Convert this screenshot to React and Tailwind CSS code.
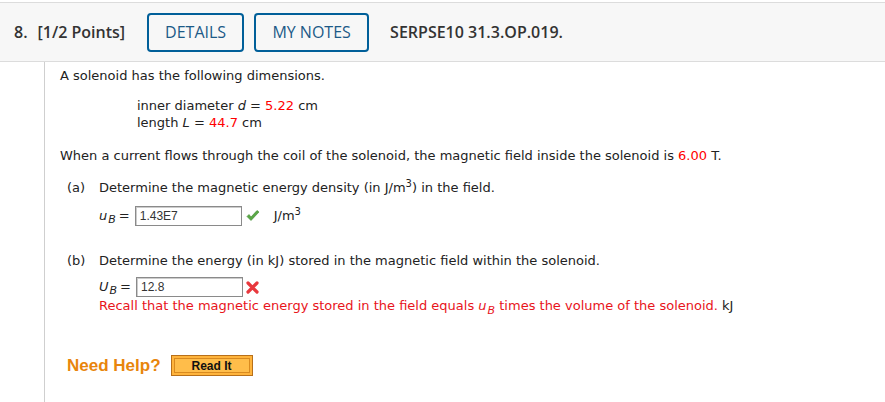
import React from 'react';

const Red = ({ children }) => <span className="text-[#ff0000]">{children}</span>;

const Sub = ({ children }) => (
  <span className="relative top-[4px] text-[11px] ml-[1px] italic">{children}</span>
);

const CheckIcon = () => (
  <svg width="14" height="12" viewBox="0 0 14 12" className="ml-[4px]">
    <path d="M1 6.5 L5 10.5 L13 2 L11 0.5 L5 7 L3 4.5 Z" fill="#5aa845" stroke="#3f8a32" strokeWidth="0.6" />
  </svg>
);

const CrossIcon = () => (
  <svg width="13" height="13" viewBox="0 0 13 13" className="ml-[3px]">
    <path d="M2 2 L11 11 M11 2 L2 11" stroke="#e8383d" strokeWidth="3.2" strokeLinecap="round" />
  </svg>
);

const AnswerBox = ({ value }) => (
  <div className="w-[107px] h-[20px] border border-[#8a8a8a] bg-white flex items-center px-[4px] text-[12px] text-[#333] font-['Liberation_Sans',Arial,sans-serif] shadow-[inset_1px_1px_0_#ccc]">
    {value}
  </div>
);

export default function App() {
  return (
    <div className="w-[885px] h-[402px] bg-white overflow-hidden text-[#222]">
      <header className="mt-[2px] h-[60px] bg-[#f7f7f7] border-y border-[#dcdcdc] flex items-center pl-[14px] font-['Open_Sans',sans-serif] text-[16px] font-semibold text-[#333]">
        <span>8.</span>
        <span className="ml-[10px]">[1/2 Points]</span>
        <button className="ml-[22px] w-[97px] h-[39px] border-2 border-[#005f99] rounded-[4px] text-[#1c5a87] font-normal text-[16px]">
          DETAILS
        </button>
        <button className="ml-[10px] w-[115px] h-[39px] border-2 border-[#005f99] rounded-[4px] text-[#1c5a87] font-normal text-[16px]">
          MY NOTES
        </button>
        <span className="ml-[21px]">SERPSE10 31.3.OP.019.</span>
      </header>

      <div className="ml-[44px] border-l border-[#cfcfcf] h-[340px] pl-[15px] pt-[5px] font-['DejaVu_Sans',Verdana,sans-serif] text-[13px]">
        <p className="leading-[17px]">A solenoid has the following dimensions.</p>

        <div className="mt-[13px] ml-[77px] leading-[17px]">
          <div>
            inner diameter <i>d</i> = <Red>5.22</Red> cm
          </div>
          <div>
            length <i>L</i> = <Red>44.7</Red> cm
          </div>
        </div>

        <p className="mt-[16px] leading-[17px]">
          When a current flows through the coil of the solenoid, the magnetic field inside the solenoid is{' '}
          <Red>6.00</Red> T.
        </p>

        <div className="mt-[15px] ml-[7px]">
          <div className="flex leading-[17px]">
            <span className="w-[32px]">(a)</span>
            <span>
              Determine the magnetic energy density (in J/m<sup className="text-[10px]">3</sup>) in the field.
            </span>
          </div>
          <div className="ml-[32px] mt-[9px] flex items-center h-[22px]">
            <span className="italic">u</span>
            <Sub>B</Sub>
            <span className="ml-[3px] mr-[5px]">=</span>
            <AnswerBox value="1.43E7" />
            <CheckIcon />
            <span className="ml-[14px]">
              J/m<sup className="text-[10px]">3</sup>
            </span>
          </div>
        </div>

        <div className="mt-[25px] ml-[7px]">
          <div className="flex leading-[17px]">
            <span className="w-[32px]">(b)</span>
            <span>Determine the energy (in kJ) stored in the magnetic field within the solenoid.</span>
          </div>
          <div className="ml-[32px] mt-[8px] flex items-center h-[20px]">
            <span className="italic">U</span>
            <Sub>B</Sub>
            <span className="ml-[3px] mr-[5px]">=</span>
            <AnswerBox value="12.8" />
            <CrossIcon />
          </div>
          <div className="ml-[32px] leading-[17px]">
            <span className="text-[#e8141b]">
              Recall that the magnetic energy stored in the field equals <i>u</i>
              <Sub>B</Sub> times the volume of the solenoid.
            </span>{' '}
            kJ
          </div>
        </div>

        <div className="mt-[38px] ml-[7px] flex items-center">
          <span className="font-['Liberation_Sans',Arial,sans-serif] font-bold text-[17px] text-[#e8850c]">
            Need Help?
          </span>
          <button className="ml-[10px] w-[82px] h-[21px] border border-[#b8701a] bg-[#ffb43c] p-[2px]">
            <div className="h-full border border-[#d98a1f] bg-[#ffbd4a] flex items-center justify-center font-['Liberation_Sans',Arial,sans-serif] font-bold text-[12px] text-[#111]">
              Read It
            </div>
          </button>
        </div>
      </div>
    </div>
  );
}
